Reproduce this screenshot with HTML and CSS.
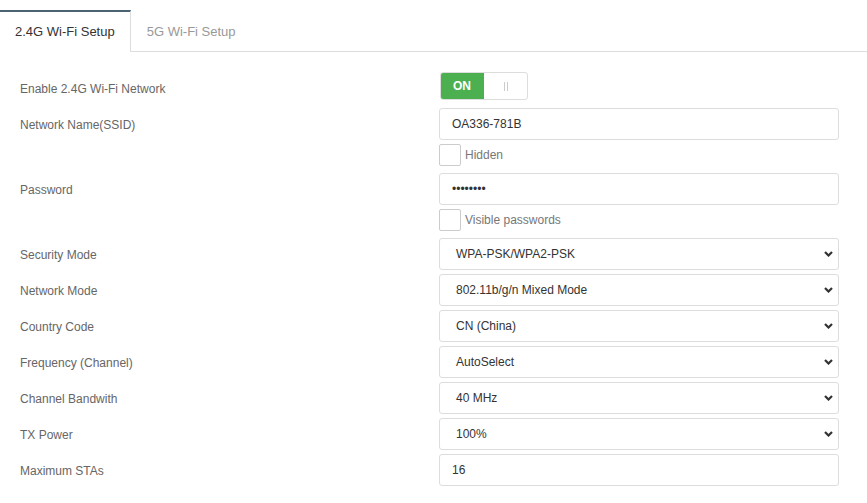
FILE: index.html
```html
<!DOCTYPE html>
<html>
<head>
<meta charset="utf-8">
<link rel="stylesheet" href="styles.css">
</head>
<body>
<div class="page">
  <div class="tabs">
    <div class="tab active">2.4G Wi-Fi Setup</div>
    <div class="tab">5G Wi-Fi Setup</div>
  </div>
  <div class="form">
    <div class="row row-toggle">
      <div class="label label-toggle">Enable 2.4G Wi-Fi Network</div>
      <div class="control">
        <div class="toggle"><span class="on">ON</span><span class="off"><i class="bar"></i><i class="bar"></i></span></div>
      </div>
    </div>
    <div class="row row-check">
      <div class="label">Network Name(SSID)</div>
      <div class="control">
        <input class="input" type="text" value="OA336-781B">
        <label class="check"><span class="box"></span><span>Hidden</span></label>
      </div>
    </div>
    <div class="row row-check">
      <div class="label">Password</div>
      <div class="control">
        <input class="input" type="password" value="12345678">
        <label class="check"><span class="box"></span><span>Visible passwords</span></label>
      </div>
    </div>
    <div class="row">
      <div class="label">Security Mode</div>
      <div class="control select-wrap">
        <div class="select">WPA-PSK/WPA2-PSK</div>
        <svg class="chev" width="9" height="6" viewBox="0 0 9 6"><polyline points="1,1 4.5,4.5 8,1" fill="none" stroke="#333" stroke-width="2.2"/></svg>
      </div>
    </div>
    <div class="row">
      <div class="label">Network Mode</div>
      <div class="control select-wrap">
        <div class="select">802.11b/g/n Mixed Mode</div>
        <svg class="chev" width="9" height="6" viewBox="0 0 9 6"><polyline points="1,1 4.5,4.5 8,1" fill="none" stroke="#333" stroke-width="2.2"/></svg>
      </div>
    </div>
    <div class="row">
      <div class="label">Country Code</div>
      <div class="control select-wrap">
        <div class="select">CN (China)</div>
        <svg class="chev" width="9" height="6" viewBox="0 0 9 6"><polyline points="1,1 4.5,4.5 8,1" fill="none" stroke="#333" stroke-width="2.2"/></svg>
      </div>
    </div>
    <div class="row">
      <div class="label">Frequency (Channel)</div>
      <div class="control select-wrap">
        <div class="select">AutoSelect</div>
        <svg class="chev" width="9" height="6" viewBox="0 0 9 6"><polyline points="1,1 4.5,4.5 8,1" fill="none" stroke="#333" stroke-width="2.2"/></svg>
      </div>
    </div>
    <div class="row">
      <div class="label">Channel Bandwith</div>
      <div class="control select-wrap">
        <div class="select">40 MHz</div>
        <svg class="chev" width="9" height="6" viewBox="0 0 9 6"><polyline points="1,1 4.5,4.5 8,1" fill="none" stroke="#333" stroke-width="2.2"/></svg>
      </div>
    </div>
    <div class="row">
      <div class="label">TX Power</div>
      <div class="control select-wrap">
        <div class="select">100%</div>
        <svg class="chev" width="9" height="6" viewBox="0 0 9 6"><polyline points="1,1 4.5,4.5 8,1" fill="none" stroke="#333" stroke-width="2.2"/></svg>
      </div>
    </div>
    <div class="row">
      <div class="label">Maximum STAs</div>
      <div class="control">
        <input class="input" type="text" value="16">
      </div>
    </div>
  </div>
</div>
</body>
</html>
```
FILE: styles.css
```css
* { box-sizing: border-box; }
html, body { margin: 0; padding: 0; background: #fff; }
body { font-family: "Liberation Sans", Arial, sans-serif; color: #333; }
.page { padding-top: 10px; }
.tabs {
  display: flex;
  border-bottom: 1px solid #ddd;
}
.tab {
  font-size: 13px;
  line-height: 15px;
  padding: 12px 15px 12px 16px;
  color: #999;
  border-top: 2px solid transparent;
}
.tab.active {
  color: #333;
  border-top: 2px solid #4b6272;
  border-right: 1px solid #ddd;
  padding-left: 15px;
  margin-bottom: -1px;
  padding-bottom: 13px;
  background: #fff;
}
.form {
  padding: 20px 0 0 20px;
  display: flex;
  flex-direction: column;
  gap: 4px;
}
.row {
  display: grid;
  grid-template-columns: 419px 400px;
  align-items: start;
}
.row-toggle { margin-bottom: 1px; }
.row-check { margin-bottom: 3px; }
.label {
  font-size: 12px;
  line-height: 32px;
  height: 32px;
  padding-top: 1px;
  color: #666;
}
.label-toggle { line-height: 28px; height: 31px; padding-top: 3px; }
.control {
  display: flex;
  flex-direction: column;
  gap: 4px;
}
.toggle {
  display: flex;
  width: 88px;
  height: 28px;
  margin-left: 1px;
  border: 1px solid #ddd;
  border-radius: 3px;
  overflow: hidden;
}
.toggle .on {
  width: 44px;
  margin: -1px 0 -1px -1px;
  background: #4caf50;
  color: #fff;
  font-weight: bold;
  font-size: 12px;
  display: flex;
  align-items: center;
  justify-content: center;
  border-radius: 3px 0 0 3px;
}
.toggle .off {
  flex: 1;
  display: flex;
  align-items: center;
  justify-content: center;
  gap: 2px;
}
.toggle .bar {
  display: block;
  width: 1px;
  height: 9px;
  background: #ccc;
}
.input, .select {
  width: 400px;
  height: 32px;
  border: 1px solid #ddd;
  border-radius: 3px;
  font-family: "Liberation Sans", Arial, sans-serif;
  font-size: 12px;
  color: #333;
  background: #fff;
  padding: 0 12px;
  outline: none;
  margin: 0;
}
.select {
  display: flex;
  align-items: center;
  padding-left: 16px;
}
.select-wrap { position: relative; }
.chev {
  position: absolute;
  right: 6px;
  top: 13px;
}
.check {
  display: flex;
  align-items: center;
  gap: 4px;
  font-size: 12px;
  color: #777;
}
.box {
  width: 22px;
  height: 22px;
  border: 1px solid #ccc;
  border-radius: 2px;
  background: #fff;
}
```
